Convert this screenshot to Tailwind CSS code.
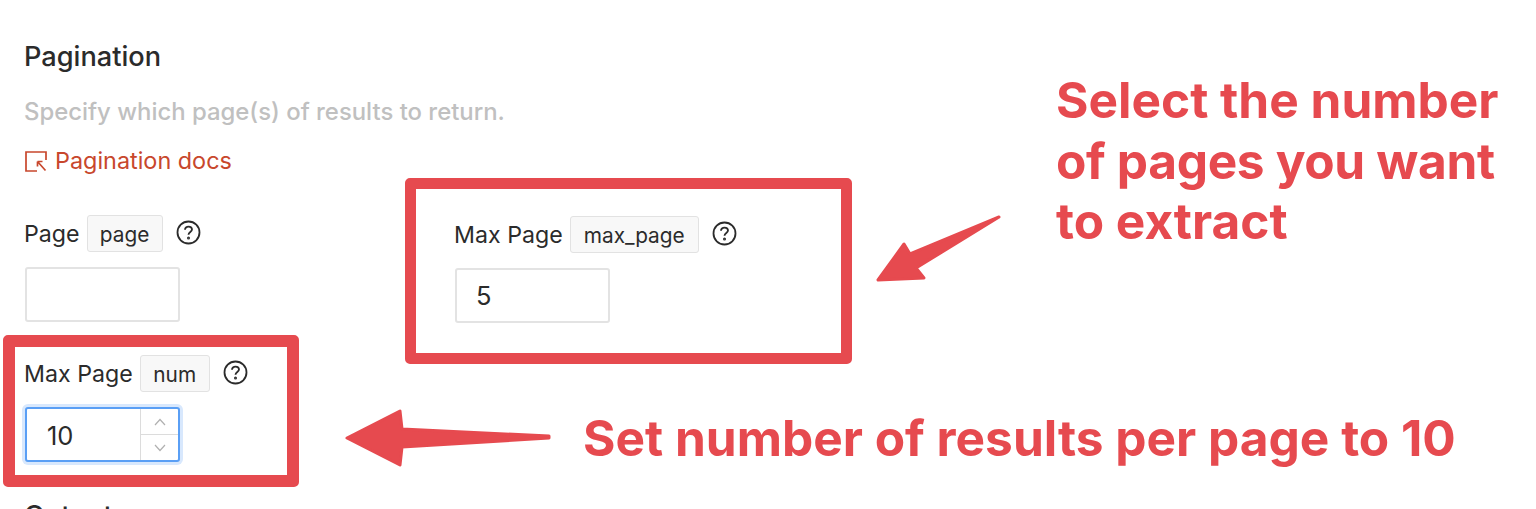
<!DOCTYPE html>
<html lang="en">
<head>
    <meta charset="UTF-8">
    <title>Pagination</title>
    <script src="https://cdn.jsdelivr.net/npm/@tailwindcss/browser@4"></script>
</head>
<body class="bg-white">
<div class="relative h-[509px] w-[1536px] overflow-hidden pl-[25px] pt-[42px] font-['Inter',sans-serif] text-[#2b2b2b]">

    <!-- Form -->
    <h2 class="-ml-px h-[30px] text-[27.2px] leading-[30px] font-medium">Pagination</h2>
    <p class="-ml-px mt-[26px] h-[28px] text-[23.9px] leading-[28px] font-medium text-[#c0c0c0]">Specify which page(s) of results to return.</p>
    <a class="mt-[21px] flex h-[28px] items-center gap-[9px] text-[23.4px] leading-[28px] text-[#c8472c]">
        <svg class="h-[21px] w-[22px]" viewBox="0 0 22 21" fill="none" stroke="#c8472c" stroke-width="1.7">
            <path d="M12 20H1V1H21V9"/>
            <path d="M12.500 10.500H17.500M12.500 10.500V15.500M12.500 10.500L20.500 19.500"/>
        </svg>
        <span class="-ml-px">Pagination docs</span>
    </a>

    <div class="mt-[40px] flex h-[37px] items-center">
        <span class="-ml-px pt-[2px] text-[23.2px]">Page</span>
        <span class="ml-[7px] flex h-[37px] w-[76px] items-center justify-center rounded-[3px] border border-[#e2e2e2] bg-[#f8f8f8] pt-[3px] text-[20.800px]">page</span>
        <svg class="ml-[13px] mb-[2px] h-[25px] w-[25px]" viewBox="0 0 25 25" fill="none" stroke="#2b2b2b" stroke-width="1.8">
            <circle cx="12.500" cy="12.500" r="11"/>
            <path d="M9 9.800C9 7.800 10.500 6.600 12.500 6.600C14.500 6.600 16 7.800 16 9.600C16 12 12.500 12.200 12.500 14.800"/>
            <circle cx="12.500" cy="18" r="0.600"/>
        </svg>
    </div>
    <div class="mt-[15px] h-[55px] w-[155px] rounded-[3px] border-2 border-[#e3e3e3] bg-white"></div>

    <div class="mt-[33px] flex h-[37px] items-center">
        <span class="-ml-px pt-[2px] text-[23.2px]">Max Page</span>
        <span class="ml-[7px] flex h-[37px] w-[70px] items-center justify-center rounded-[3px] border border-[#e2e2e2] bg-[#f8f8f8] pt-[3px] text-[20.800px]">num</span>
        <svg class="ml-[13px] mb-[2px] h-[25px] w-[25px]" viewBox="0 0 25 25" fill="none" stroke="#2b2b2b" stroke-width="1.8">
            <circle cx="12.500" cy="12.500" r="11"/>
            <path d="M9 9.800C9 7.800 10.500 6.600 12.500 6.600C14.500 6.600 16 7.800 16 9.600C16 12 12.500 12.200 12.500 14.800"/>
            <circle cx="12.500" cy="18" r="0.600"/>
        </svg>
    </div>
    <div class="mt-[15px] flex h-[55px] w-[155px] rounded-[3px] border-2 border-[#5a9ff5] bg-white shadow-[0_0_0_3px_#d8e8fd]">
        <span class="flex-1 pl-[20px] text-[25.500px] leading-[53px]">10</span>
        <div class="flex w-[38px] flex-col border-l border-[#dcdcdc]">
            <div class="flex flex-1 items-center justify-center border-b border-[#dcdcdc]">
                <svg class="h-[8px] w-[12px]" viewBox="0 0 12 8" fill="none" stroke="#b0b0b0" stroke-width="1.200"><path d="M1 7L6 1.500L11 7"/></svg>
            </div>
            <div class="flex flex-1 items-center justify-center">
                <svg class="h-[8px] w-[12px]" viewBox="0 0 12 8" fill="none" stroke="#b0b0b0" stroke-width="1.200"><path d="M1 1L6 6.500L11 1"/></svg>
            </div>
        </div>
    </div>

    <h2 class="-ml-px mt-[39px] text-[27.2px] leading-[30px] font-medium">Output</h2>

    <!-- Annotation overlays -->
    <div class="absolute left-[3px] top-[335px] h-[152px] w-[296px] rounded-[5px] border-[12px] border-[#e64a4f]"></div>

    <div class="absolute left-[405px] top-[178px] h-[186px] w-[447px] rounded-[5px] border-[11px] border-[#e64a4f] pl-[39px] pt-[27px]">
        <div class="flex h-[37px] items-center">
            <span class="-ml-px pt-[2px] text-[23.2px]">Max Page</span>
            <span class="ml-[7px] flex h-[37px] w-[129px] items-center justify-center rounded-[3px] border border-[#e2e2e2] bg-[#f8f8f8] pt-[3px] text-[20.800px]">max_page</span>
            <svg class="ml-[13px] mb-[2px] h-[25px] w-[25px]" viewBox="0 0 25 25" fill="none" stroke="#2b2b2b" stroke-width="1.8">
                <circle cx="12.500" cy="12.500" r="11"/>
                <path d="M9 9.800C9 7.800 10.500 6.600 12.500 6.600C14.500 6.600 16 7.800 16 9.600C16 12 12.500 12.200 12.500 14.800"/>
                <circle cx="12.500" cy="18" r="0.600"/>
            </svg>
        </div>
        <div class="mt-[15px] h-[55px] w-[155px] rounded-[3px] border-2 border-[#e3e3e3] pl-[19px] text-[25.500px] leading-[51px]">5</div>
    </div>

    <svg class="absolute inset-0 h-[509px] w-[1536px]" viewBox="0 0 1536 509" fill="#e64a4f" stroke="#e64a4f" stroke-width="3" stroke-linejoin="round">
        <path d="M999 217L910 254L904 244L878 280L924 278L916 268Z"/>
        <path d="M347 438L400 411L402 429L549 436V438L402 447L400 465Z"/>
    </svg>

    <div class="absolute left-[1056px] top-[70px] text-[49.600px] leading-[60.500px] font-bold text-[#e64a4f]">Select the number<br><span class="tracking-[-0.35px]">of pages you want</span><br>to extract</div>
    <div class="absolute left-[583px] top-[408px] text-[49.600px] leading-[61px] font-bold whitespace-nowrap text-[#e64a4f]">Set number of results per page to 10</div>
</div>
</body>
</html>
